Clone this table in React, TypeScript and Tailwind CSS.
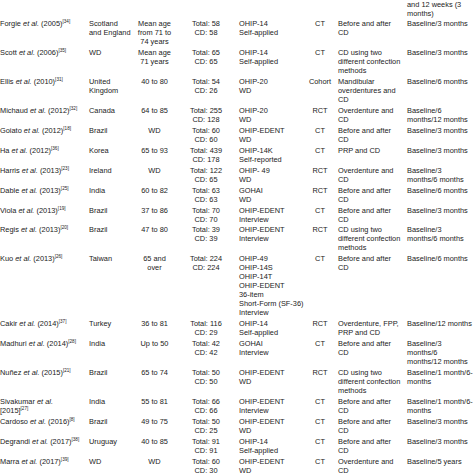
import React from 'react';

interface StudyRow {
  author?: string;
  year?: string;
  yearLine?: boolean; // year wraps onto its own line
  ref?: string;
  country?: string[];
  age?: string[];
  sample?: string[];
  instrument?: string[];
  design?: string;
  technique?: string[];
  interval?: string[];
}

const rows: StudyRow[] = [
  { interval: ['and 12 weeks (3', 'months)'] },
  {
    author: 'Forgie', year: '(2005)', ref: '34',
    country: ['Scotland', 'and England'],
    age: ['Mean age', 'from 71 to', '74 years'],
    sample: ['Total: 58', 'CD: 58'],
    instrument: ['OHIP-14', 'Self-applied'],
    design: 'CT',
    technique: ['Before and after', 'CD'],
    interval: ['Baseline/3 months'],
  },
  {
    author: 'Scott', year: '(2006)', ref: '35',
    country: ['WD'],
    age: ['Mean age', '71 years'],
    sample: ['Total: 65', 'CD: 65'],
    instrument: ['OHIP-14', 'Self-applied'],
    design: 'CT',
    technique: ['CD using two', 'different confection', 'methods'],
    interval: ['Baseline/3 months'],
  },
  {
    author: 'Ellis', year: '(2010)', ref: '31',
    country: ['United', 'Kingdom'],
    age: ['40 to 80'],
    sample: ['Total: 54', 'CD: 26'],
    instrument: ['OHIP-20', 'WD'],
    design: 'Cohort',
    technique: ['Mandibular', 'overdentures and', 'CD'],
    interval: ['Baseline/6 months'],
  },
  {
    author: 'Michaud', year: '(2012)', ref: '32',
    country: ['Canada'],
    age: ['64 to 85'],
    sample: ['Total: 255', 'CD: 128'],
    instrument: ['OHIP-20', 'WD'],
    design: 'RCT',
    technique: ['Overdenture and', 'CD'],
    interval: ['Baseline/6', 'months/12 months'],
  },
  {
    author: 'Goiato', year: '(2012)', ref: '18',
    country: ['Brazil'],
    age: ['WD'],
    sample: ['Total: 60', 'CD: 60'],
    instrument: ['OHIP-EDENT', 'WD'],
    design: 'CT',
    technique: ['Before and after', 'CD'],
    interval: ['Baseline/3 months'],
  },
  {
    author: 'Ha', year: '(2012)', ref: '36',
    country: ['Korea'],
    age: ['65 to 93'],
    sample: ['Total: 439', 'CD: 178'],
    instrument: ['OHIP-14K', 'Self-reported'],
    design: 'CT',
    technique: ['PRP and CD'],
    interval: ['Baseline/3 months'],
  },
  {
    author: 'Harris', year: '(2013)', ref: '23',
    country: ['Ireland'],
    age: ['WD'],
    sample: ['Total: 122', 'CD: 65'],
    instrument: ['OHIP- 49', 'WD'],
    design: 'RCT',
    technique: ['Overdenture and', 'CD'],
    interval: ['Baseline/3', 'months/6 months'],
  },
  {
    author: 'Dable', year: '(2013)', ref: '25',
    country: ['India'],
    age: ['60 to 82'],
    sample: ['Total: 63', 'CD: 63'],
    instrument: ['GOHAI', 'WD'],
    design: 'RCT',
    technique: ['Before and after', 'CD'],
    interval: ['Baseline/6 months'],
  },
  {
    author: 'Viola', year: '(2013)', ref: '19',
    country: ['Brazil'],
    age: ['37 to 86'],
    sample: ['Total: 70', 'CD: 70'],
    instrument: ['OHIP-EDENT', 'Interview'],
    design: 'CT',
    technique: ['Before and after', 'CD'],
    interval: ['Baseline/3 months'],
  },
  {
    author: 'Regis', year: '(2013)', ref: '20',
    country: ['Brazil'],
    age: ['47 to 80'],
    sample: ['Total: 39', 'CD: 39'],
    instrument: ['OHIP-EDENT', 'Interview'],
    design: 'RCT',
    technique: ['CD using two', 'different confection', 'methods'],
    interval: ['Baseline/3', 'months/6 months'],
  },
  {
    author: 'Kuo', year: '(2013)', ref: '26',
    country: ['Taiwan'],
    age: ['65 and', 'over'],
    sample: ['Total: 224', 'CD: 224'],
    instrument: ['OHIP-49', 'OHIP-14S', 'OHIP-14T', 'OHIP-EDENT', '36-item', 'Short-Form (SF-36)', 'Interview'],
    design: 'CT',
    technique: ['Before and after', 'CD'],
    interval: ['Baseline/6 months'],
  },
  {
    author: 'Cakir', year: '(2014)', ref: '37',
    country: ['Turkey'],
    age: ['36 to 81'],
    sample: ['Total: 116', 'CD: 29'],
    instrument: ['OHIP-14', 'Self-applied'],
    design: 'RCT',
    technique: ['Overdenture, FPP,', 'PRP and CD'],
    interval: ['Baseline/12 months'],
  },
  {
    author: 'Madhuri', year: '(2014)', ref: '28',
    country: ['India'],
    age: ['Up to 50'],
    sample: ['Total: 42', 'CD: 42'],
    instrument: ['GOHAI', 'Interview'],
    design: 'CT',
    technique: ['Before and after', 'CD'],
    interval: ['Baseline/3', 'months/6', 'months/12 months'],
  },
  {
    author: 'Nuñez', year: '(2015)', ref: '21',
    country: ['Brazil'],
    age: ['65 to 74'],
    sample: ['Total: 50', 'CD: 50'],
    instrument: ['OHIP-EDENT', 'WD'],
    design: 'RCT',
    technique: ['CD using two', 'different confection', 'methods'],
    interval: ['Baseline/1 month/6-', 'months'],
  },
  {
    author: 'Sivakumar', year: '[2015]', yearLine: true, ref: '27',
    country: ['India'],
    age: ['55 to 81'],
    sample: ['Total: 66', 'CD: 66'],
    instrument: ['OHIP-EDENT', 'Interview'],
    design: 'CT',
    technique: ['Before and after', 'CD'],
    interval: ['Baseline/1 month/6-', 'months'],
  },
  {
    author: 'Cardoso', year: '(2016)', ref: '8',
    country: ['Brazil'],
    age: ['49 to 75'],
    sample: ['Total: 50', 'CD: 25'],
    instrument: ['OHIP-EDENT', 'WD'],
    design: 'CT',
    technique: ['Before and after', 'CD'],
    interval: ['Baseline/3 months'],
  },
  {
    author: 'Degrandi', year: '(2017)', ref: '38',
    country: ['Uruguay'],
    age: ['40 to 85'],
    sample: ['Total: 91', 'CD: 91'],
    instrument: ['OHIP-14', 'Self-applied'],
    design: 'CT',
    technique: ['Before and after', 'CD'],
    interval: ['Baseline/3 months'],
  },
  {
    author: 'Marra', year: '(2017)', ref: '39',
    country: ['WD'],
    age: ['WD'],
    sample: ['Total: 60', 'CD: 30'],
    instrument: ['OHIP-EDENT', 'WD'],
    design: 'CT',
    technique: ['Overdenture and', 'CD'],
    interval: ['Baseline/5 years'],
  },
];

function Lines({ lines, className = '' }: { lines?: string[]; className?: string }) {
  return (
    <div className={`flex flex-col ${className}`}>
      {(lines || []).map((line, i) => (
        <span key={i} className="whitespace-nowrap">
          {line}
        </span>
      ))}
    </div>
  );
}

function Ref({ n }: { n: string }) {
  return <sup className="text-[4.6px] top-[-3px]">[{n}]</sup>;
}

function StudyCell({ row }: { row: StudyRow }) {
  if (!row.author) return <div />;
  if (row.yearLine) {
    return (
      <div className="flex flex-col">
        <span className="whitespace-nowrap">
          {row.author} <i>et al.</i>
        </span>
        <span className="whitespace-nowrap">
          {row.year}
          <Ref n={row.ref || ''} />
        </span>
      </div>
    );
  }
  return (
    <div className="whitespace-nowrap">
      {row.author} <i>et al.</i> {row.year}
      <Ref n={row.ref || ''} />
    </div>
  );
}

export default function App() {
  return (
    <div className="w-[474px] h-[474px] overflow-hidden bg-white text-[#222] font-['Liberation_Sans',Arial,sans-serif] text-[7.4px] leading-[9px]">
      <div className="mt-[-0.5px] grid grid-cols-[89px_47px_37px_66px_66px_30px_70px_69px] gap-y-[1.9px]">
        {rows.map((row, i) => (
          <React.Fragment key={i}>
            <StudyCell row={row} />
            <Lines lines={row.country} />
            <Lines lines={row.age} className="items-center" />
            <Lines lines={row.sample} className="items-center" />
            <Lines lines={row.instrument} />
            <div className="whitespace-nowrap text-center">{row.design}</div>
            <Lines lines={row.technique} className="pl-[3px]" />
            <Lines lines={row.interval} className="pl-[2px]" />
          </React.Fragment>
        ))}
      </div>
    </div>
  );
}
